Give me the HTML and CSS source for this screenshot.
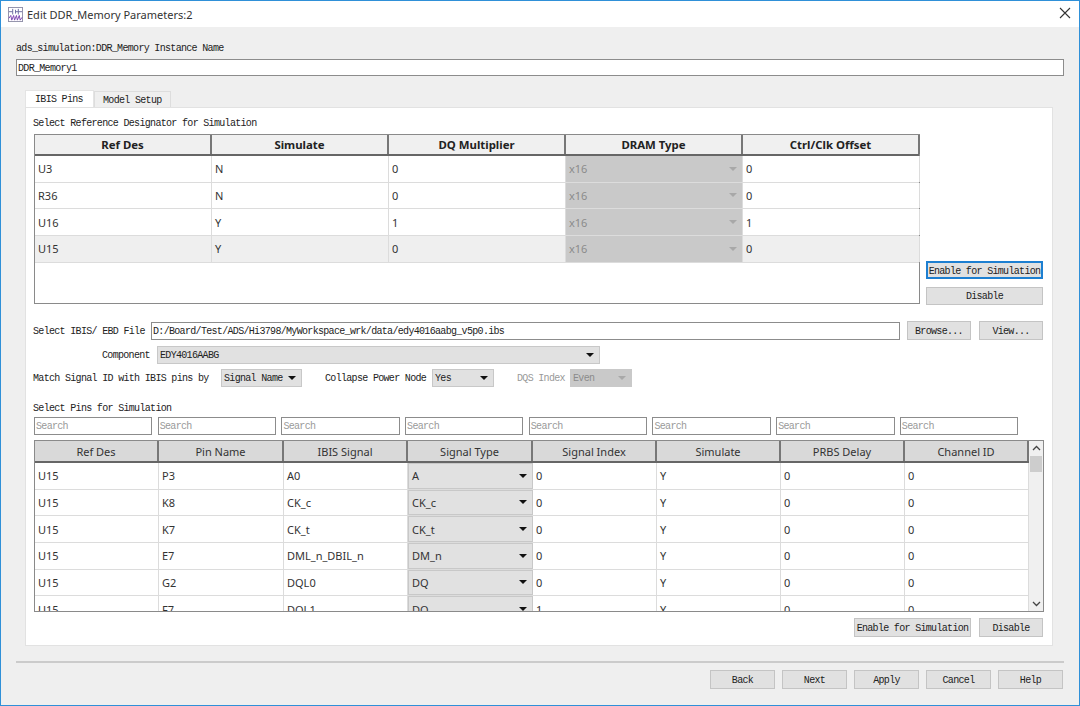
FILE: index.html
```html
<!DOCTYPE html>
<html lang="en">
<head>
<meta charset="utf-8">
<title>Edit DDR_Memory Parameters:2</title>
<link rel="stylesheet" href="styles.css">
</head>
<body>
<div class="window">
  <header class="titlebar">
    <svg class="app-icon" width="15" height="15" viewBox="0 0 16 16">
      <rect x="0.5" y="0.5" width="15" height="15" fill="#fff" stroke="#8f8fa8"/>
      <path d="M1 5H5M5 2V8M8 3V7M8 5H11M11 2V8M11 5H15" fill="none" stroke="#6a6aa0"/>
      <path d="M1 12L3 9L4 14L6 9L7 14L9 9L10 14L12 9L13 14L15 11" fill="none" stroke="#7a3fb0"/>
    </svg>
    <span class="title">Edit DDR_Memory Parameters:2</span>
    <svg class="close" width="12" height="12" viewBox="0 0 12 12"><path d="M1 1L11 11M11 1L1 11" stroke="#333" stroke-width="1.1"/></svg>
  </header>
  <main class="content">
    <div class="mono name-label">ads_simulation:DDR_Memory Instance Name</div>
    <div class="mono field name-field">DDR_Memory1</div>
    <div class="tabs">
      <div class="mono tab active">IBIS Pins</div>
      <div class="mono tab">Model Setup</div>
    </div>
    <section class="panel">
      <div class="mono label">Select Reference Designator for Simulation</div>
      <div class="refs">
        <div class="grid-box ref-table">
          <div class="row head light"><div>Ref Des</div><div>Simulate</div><div>DQ Multiplier</div><div>DRAM Type</div><div>Ctrl/Clk Offset</div></div>
          <div class="row"><div>U3</div><div>N</div><div>0</div><div class="dram">x16<i class="arrow dim"></i></div><div>0</div></div>
          <div class="row"><div>R36</div><div>N</div><div>0</div><div class="dram">x16<i class="arrow dim"></i></div><div>0</div></div>
          <div class="row"><div>U16</div><div>Y</div><div>1</div><div class="dram">x16<i class="arrow dim"></i></div><div>1</div></div>
          <div class="row selected"><div>U15</div><div>Y</div><div>0</div><div class="dram">x16<i class="arrow dim"></i></div><div>0</div></div>
        </div>
        <div class="side-buttons">
          <button class="mono btn focus">Enable for Simulation</button>
          <button class="mono btn">Disable</button>
        </div>
      </div>
      <div class="file-row">
        <span class="mono file-label">Select IBIS/ EBD File</span>
        <div class="mono field file-field">D:/Board/Test/ADS/Hi3798/MyWorkspace_wrk/data/edy4016aabg_v5p0.ibs</div>
        <button class="mono btn w64">Browse...</button>
        <button class="mono btn w64 ml8">View...</button>
      </div>
      <div class="component-row">
        <span class="mono comp-label">Component</span>
        <div class="mono select comp-select">EDY4016AABG<i class="arrow"></i></div>
      </div>
      <div class="match-row">
        <span class="mono match-label">Match Signal ID with IBIS pins by</span>
        <div class="mono select s81">Signal Name<i class="arrow"></i></div>
        <span class="mono collapse-label">Collapse Power Node</span>
        <div class="mono select s62">Yes<i class="arrow"></i></div>
        <span class="mono dqs-label">DQS Index</span>
        <div class="mono select s62 disabled">Even<i class="arrow dim"></i></div>
      </div>
      <div class="mono label pins-label">Select Pins for Simulation</div>
      <div class="searches">
        <div class="mono search">Search</div><div class="mono search">Search</div><div class="mono search">Search</div><div class="mono search">Search</div>
        <div class="mono search">Search</div><div class="mono search">Search</div><div class="mono search">Search</div><div class="mono search">Search</div>
      </div>
      <div class="grid-box pin-box">
        <div class="pin-table">
          <div class="row head dark"><div>Ref Des</div><div>Pin Name</div><div>IBIS Signal</div><div>Signal Type</div><div>Signal Index</div><div>Simulate</div><div>PRBS Delay</div><div>Channel ID</div></div>
          <div class="row"><div>U15</div><div>P3</div><div>A0</div><div class="sig">A<i class="arrow"></i></div><div>0</div><div>Y</div><div>0</div><div>0</div></div>
          <div class="row"><div>U15</div><div>K8</div><div>CK_c</div><div class="sig">CK_c<i class="arrow"></i></div><div>0</div><div>Y</div><div>0</div><div>0</div></div>
          <div class="row"><div>U15</div><div>K7</div><div>CK_t</div><div class="sig">CK_t<i class="arrow"></i></div><div>0</div><div>Y</div><div>0</div><div>0</div></div>
          <div class="row"><div>U15</div><div>E7</div><div>DML_n_DBIL_n</div><div class="sig">DM_n<i class="arrow"></i></div><div>0</div><div>Y</div><div>0</div><div>0</div></div>
          <div class="row"><div>U15</div><div>G2</div><div>DQL0</div><div class="sig">DQ<i class="arrow"></i></div><div>0</div><div>Y</div><div>0</div><div>0</div></div>
          <div class="row"><div>U15</div><div>F7</div><div>DQL1</div><div class="sig">DQ<i class="arrow"></i></div><div>1</div><div>Y</div><div>0</div><div>0</div></div>
        </div>
        <div class="scrollbar">
          <svg width="15" height="15" viewBox="0 0 15 15"><path d="M4 9L7.500 5.500L11 9" fill="none" stroke="#444" stroke-width="1.300"/></svg>
          <div class="thumb"></div>
          <svg class="down" width="15" height="15" viewBox="0 0 15 15"><path d="M4 6L7.500 9.500L11 6" fill="none" stroke="#444" stroke-width="1.300"/></svg>
        </div>
      </div>
      <div class="pin-buttons">
        <button class="mono btn w117">Enable for Simulation</button>
        <button class="mono btn w64">Disable</button>
      </div>
    </section>
    <div class="separator"></div>
    <footer class="footer">
      <button class="mono btn w65">Back</button>
      <button class="mono btn w65">Next</button>
      <button class="mono btn w65">Apply</button>
      <button class="mono btn w65">Cancel</button>
      <button class="mono btn w65">Help</button>
    </footer>
  </main>
</div>
</body>
</html>
```
FILE: styles.css
```css
* { box-sizing: border-box; }
html, body { margin: 0; padding: 0; }
body { width: 1080px; height: 706px; overflow: hidden; font-family: "Noto Sans", sans-serif; }
.window { width: 1080px; height: 706px; border: 1px solid #2f90d8; background: #efefef; }
.titlebar { height: 26px; background: #fff; display: flex; align-items: center; padding: 0 8px 0 7px; }
.app-icon { flex: none; }
.title { margin-left: 4px; font-size: 11px; color: #333; flex: 1; }
.close { margin-bottom: 2px; }
.content { padding: 0 15px; }
.mono { font-family: "Liberation Mono", monospace; font-size: 10px; letter-spacing: -0.68px; color: #222; line-height: 14px; white-space: nowrap; padding-top: 2px; }
.name-label { margin-top: 14px; height: 14px; padding-top: 1px; }
.field { background: #fff; border: 1px solid #8c8c8c; padding-left: 1px; padding-right: 1px; display: flex; align-items: center; }
.name-field { margin-top: 4px; height: 17px; }
.tabs { margin: 14px 0 0 9px; height: 17px; display: flex; align-items: flex-end; }
.tab { height: 16px; padding-left: 8px; padding-right: 8px; background: #efefef; border: 1px solid #ddd; border-bottom: 0; display: flex; align-items: center; }
.tab.active { height: 17px; width: 69px; padding-left: 9px; padding-right: 9px; background: #fff; border-color: #e4e4e4; }
.panel { width: 1028px; height: 539px; margin-left: 9px; background: #fff; border: 1px solid #e2e2e2; padding: 7px 9px 0 7px; }
.label { height: 14px; }
.refs { margin-top: 5px; height: 171px; display: flex; align-items: flex-end; gap: 6px; padding-left: 1px; }
.grid-box { border: 1px solid #8a8a8a; background: #fff; }
.ref-table { width: 886px; height: 170px; align-self: flex-start; }
.row { display: grid; height: 26.67px; color: #333; font-size: 11px; border-bottom: 1px solid #dcdcdc; }
.ref-table .row { grid-template-columns: repeat(5, 177px); }
.row > div { border-right: 1px solid #dcdcdc; padding: 0 3px; display: flex; align-items: center; position: relative; white-space: nowrap; }
.row.head { height: 21px; font-size: 11.400px; font-weight: 700; border-bottom: 2px solid #666; color: #222; }
.row.head > div { justify-content: center; border-right: 2px solid #777; }
.head.light { background: #f0f0f0; }
.row.head.dark { background: #d9d9d9; height: 22px; font-size: 11px; font-weight: 400; color: #333; }
.selected { background: #efefef; }
.row > .dram { background: #c9c9c9; color: #8b8b8b; }
.side-buttons { display: flex; flex-direction: column; gap: 8px; }
.btn { width: 117px; height: 18px; padding-left: 0; padding-right: 0; padding-bottom: 0; background: #e1e1e1; border: 1px solid #c4c4c4; text-align: center; }
.focus { border: 2px solid #1d7fd1; width: 117px; }
.w64 { width: 64px; height: 19px; flex: none; }
.w65 { width: 65px; height: 19px; }
.w117 { width: 117px; height: 19px; }
.ml8 { margin-left: 8px; }
.file-row { margin-top: 16px; display: flex; align-items: center; height: 19px; }
.file-label { width: 118px; }
.file-field { width: 749px; height: 18px; margin-right: 7px; }
.component-row { margin-top: 6px; height: 18px; display: flex; align-items: center; }
.comp-label { margin-left: 69px; width: 55px; }
.select { height: 18px; background: #e1e1e1; border: 1px solid #c8c8c8; padding-left: 2px; padding-right: 2px; display: flex; align-items: center; position: relative; }
.comp-select { width: 443px; }
.arrow { position: absolute; right: 5px; top: 50%; margin-top: -2px; width: 0; height: 0; border: 4px solid transparent; border-top: 4px solid #111; border-bottom: 0; }
.arrow.dim { border-top-color: #a8a8a8; }
.match-row { margin-top: 5px; height: 18px; display: flex; align-items: center; }
.match-label { width: 188px; }
.s81 { width: 81px; }
.collapse-label { margin-left: 23px; width: 107px; }
.s62 { width: 62px; }
.dqs-label { margin-left: 23px; width: 53px; color: #999; }
.select.disabled { background: #c9c9c9; color: #8b8b8b; border-color: #c9c9c9; }
.pins-label { margin-top: 13px; }
.searches { margin-top: 3px; padding-left: 1px; display: flex; gap: 5.300px; }
.search { width: 118.400px; height: 18px; border: 1px solid #8c8c8c; padding-left: 1px; padding-right: 1px; color: #999; display: flex; align-items: center; background: #fff; }
.pin-box { margin: 5px 0 0 1px; width: 1010px; height: 172px; display: flex; overflow: hidden; }
.pin-table { width: 994px; flex: none; }
.pin-table .row { grid-template-columns: 124px 125px 124px 125px 124px 124px 124px 124px; }
.row > .sig { background: #e1e1e1; border: 1px solid #c8c8c8; padding: 0 3px; }
.scrollbar { flex: 1; background: #f0f0f0; position: relative; }
.scrollbar svg { display: block; }
.thumb { margin: 0 2px 0 1px; height: 16px; background: #cdcdcd; }
.down { position: absolute; bottom: 0; left: 0; }
.pin-buttons { margin-top: 6px; display: flex; justify-content: flex-end; gap: 8px; }
.separator { margin-top: 15px; height: 2px; background: #cbcbcb; }
.footer { margin-top: 7px; display: flex; justify-content: flex-end; gap: 7px; padding-right: 1px; }
```
